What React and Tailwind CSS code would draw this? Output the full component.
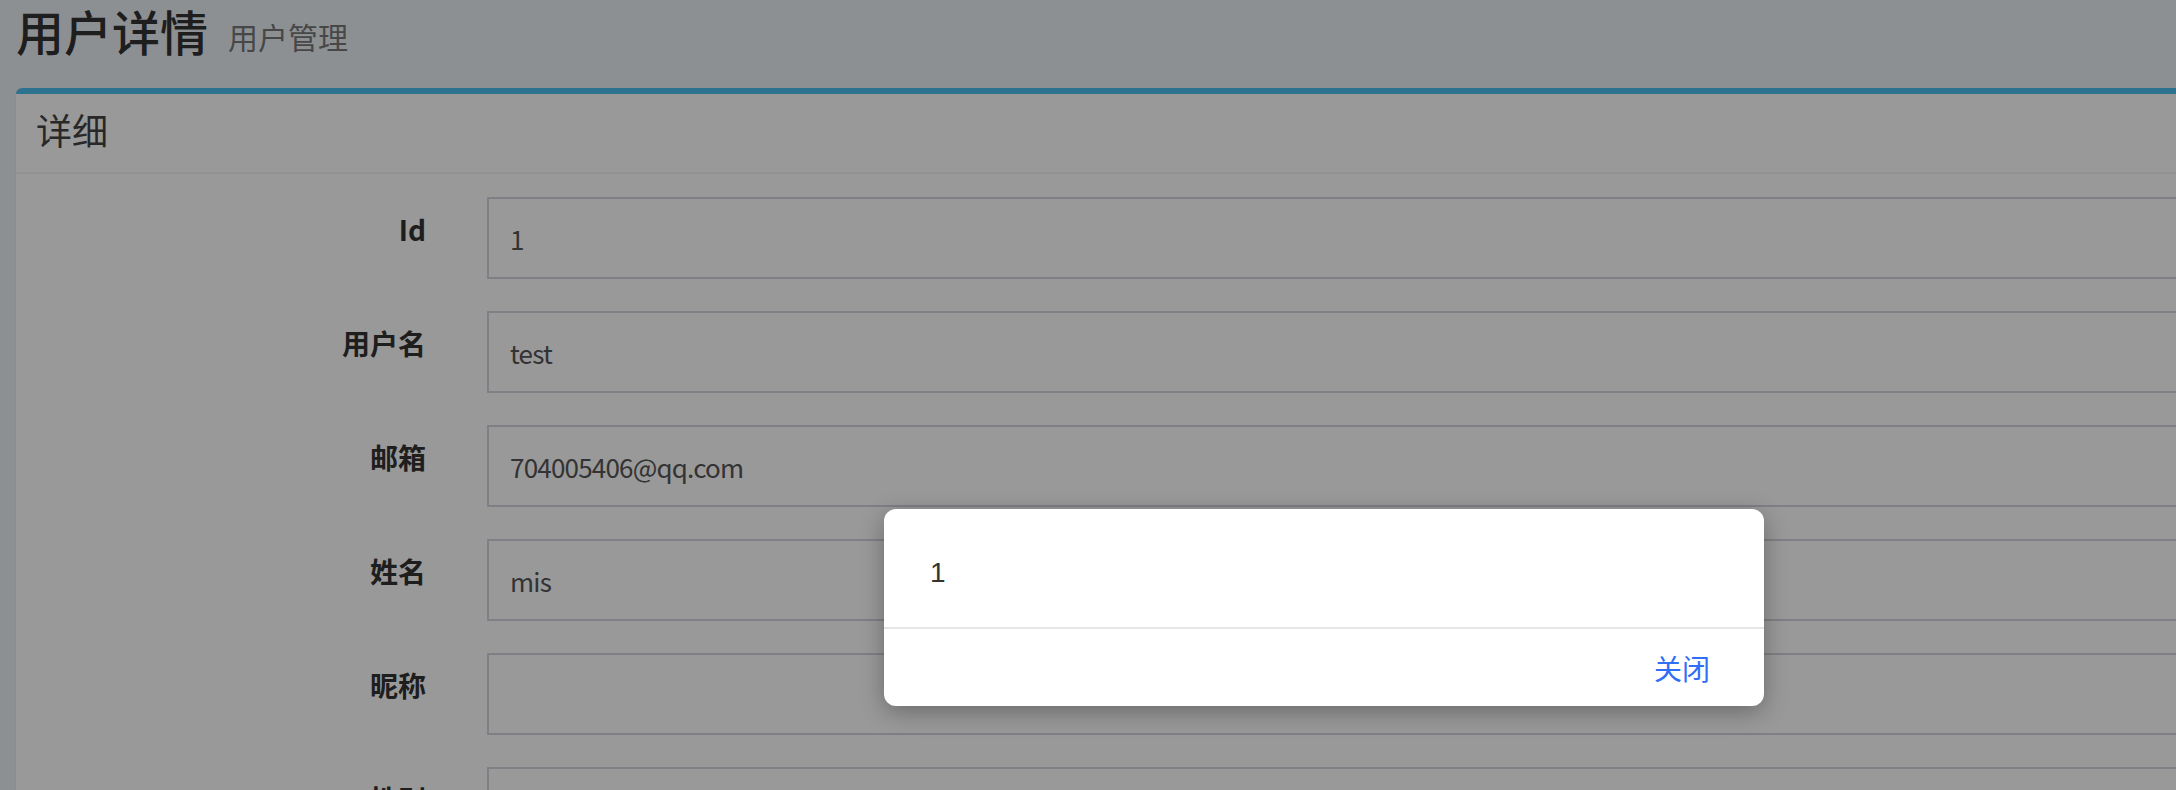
import React from "react";

const rows = [
  { label: "Id", value: "1" },
  { label: "用户名", value: "test" },
  { label: "邮箱", value: "704005406@qq.com" },
  { label: "姓名", value: "mis" },
  { label: "昵称", value: "" },
  { label: "性别", value: "" },
];

export default function App() {
  return (
    <div className="relative h-[790px] w-[2176px] overflow-hidden bg-[#ecf0f5] font-['Noto_Sans_CJK_SC','Noto_Sans',sans-serif]">
      <div className="flex items-start pl-[16px] pt-[4px]">
        <h1 className="text-[48px] font-medium leading-[53px] text-[#333]">用户详情</h1>
        <span className="ml-[20px] mt-[17px] text-[30px] leading-[30px] text-[#777]">用户管理</span>
      </div>

      <div className="ml-[16px] mt-[31px] w-[2700px] rounded-t-[6px] border-t-[6px] border-[#4bbfed] bg-white shadow-[0_2px_2px_rgba(0,0,0,0.1)]">
        <div className="border-b-2 border-[#f4f4f4] pb-[25px] pl-[20px] pt-[17px]">
          <h3 className="text-[36px] leading-[36px] text-[#444]">详细</h3>
        </div>
        <div className="pt-[23px]">
          {rows.map((r) => (
            <div key={r.label} className="mb-[32px] flex">
              <div className="w-[410px] pt-[12px] text-right text-[28px] font-bold leading-[40px] text-[#333]">
                {r.label}
              </div>
              <div className="ml-[61px] flex h-[82px] w-[2200px] items-center border-2 border-[#d2d6de] px-[21px] text-[26px] tracking-[-0.8px] text-[#555]">
                {r.value}
              </div>
            </div>
          ))}
        </div>
      </div>

      <div className="absolute inset-0 bg-black/40" />

      <div className="absolute left-[884px] top-[509px] flex h-[197px] w-[880px] flex-col rounded-[12px] bg-white shadow-[0_6px_24px_rgba(0,0,0,0.3)]">
        <div className="flex h-[118px] items-center pl-[46px] pt-[9px] font-['Liberation_Sans','Noto_Sans_CJK_SC',sans-serif] text-[28px] text-[#333]">
          1
        </div>
        <div className="h-[2px] bg-[#e5e5e5]" />
        <div className="flex flex-1 items-center justify-end pr-[54px] text-[28px] text-[#2f6ef5]">
          关闭
        </div>
      </div>
    </div>
  );
}
